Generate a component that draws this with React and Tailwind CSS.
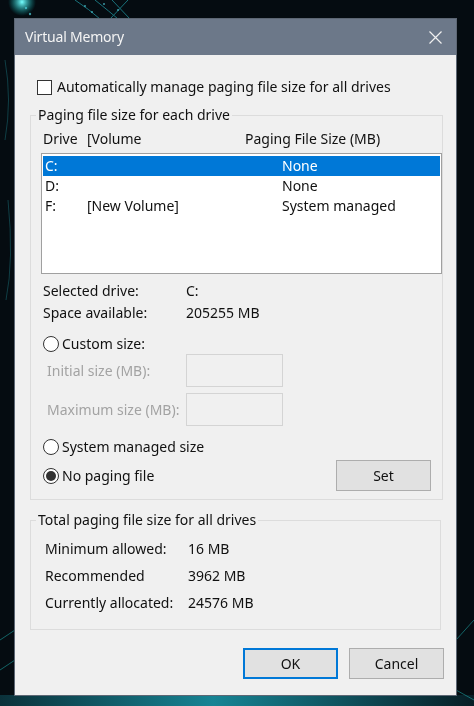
import React from "react";

const drives = [
  { drive: "C:", volume: "", size: "None", selected: true },
  { drive: "D:", volume: "", size: "None" },
  { drive: "F:", volume: "[New Volume]", size: "System managed" },
];

const totals = [
  ["Minimum allowed:", "16 MB"],
  ["Recommended", "3962 MB"],
  ["Currently allocated:", "24576 MB"],
];

function Radio({ checked, label }) {
  return (
    <div className="flex items-center h-[20px] ml-[12px]">
      <span className="w-[16px] h-[16px] rounded-full border border-[#333] bg-white flex items-center justify-center">
        {checked && <span className="w-[10px] h-[10px] rounded-full bg-[#333]" />}
      </span>
      <span className="ml-[3px]">{label}</span>
    </div>
  );
}

function Backdrop() {
  // teal wallpaper bits around the dialog
  return (
    <svg className="absolute inset-0" width="474" height="706" viewBox="0 0 474 706">
      <defs>
        <radialGradient id="glow" cx="0.5" cy="0.5" r="0.5">
          <stop offset="0" stopColor="#7ff" stopOpacity="1" />
          <stop offset="1" stopColor="#0aa" stopOpacity="0" />
        </radialGradient>
        <linearGradient id="floor" x1="0" y1="0" x2="1" y2="0">
          <stop offset="0" stopColor="#0c3a44" />
          <stop offset="0.45" stopColor="#1ba2b5" />
          <stop offset="1" stopColor="#08222a" />
        </linearGradient>
      </defs>
      <circle cx="22" cy="2" r="14" fill="url(#glow)" />
      <g stroke="#1f8c96" strokeWidth="1" fill="none" opacity="0.8">
        <path d="M75 0 Q90 10 100 19 M95 0 Q110 12 118 19 M112 0 L130 19 M128 0 L110 19" />
        <path d="M5 60 Q12 100 5 140 M8 200 Q14 260 6 300" opacity="0.5" />
      </g>
      <g fill="#4fd0dc" opacity="0.7">
        <circle cx="85" cy="6" r="1" />
        <circle cx="92" cy="12" r="1" />
        <circle cx="104" cy="4" r="1" />
        <circle cx="118" cy="10" r="1" />
        <circle cx="30" cy="14" r="1.2" />
        <circle cx="26" cy="8" r="1.2" />
      </g>
      <rect x="0" y="695" width="474" height="11" fill="url(#floor)" opacity="0.8" />
      <g stroke="#2bb" strokeWidth="1" opacity="0.5" fill="none">
        <path d="M0 640 L15 630 M0 670 L15 660 M456 640 L474 620 M456 690 L474 700" />
      </g>
    </svg>
  );
}

export default function App() {
  return (
    <div className="relative w-[474px] h-[706px] overflow-hidden bg-[#050c11] font-['Noto_Sans',sans-serif] text-[14px] leading-[20px] text-[#111]">
      <Backdrop />

      <div className="relative ml-[15px] mt-[19px] w-[441px] h-[676px] bg-[#f0f0f0] shadow-[0_0_0_1px_#5d6774]">
        {/* title bar */}
        <div className="flex items-center justify-between h-[36px] bg-[#6c7889] pl-[10px] pr-[14px]">
          <span className="text-[14px] tracking-[-0.2px] text-[#f4f4f4]">Virtual Memory</span>
          <svg width="13" height="13" viewBox="0 0 13 13" className="text-[#f0f0f0]">
            <path d="M0.5 0.5 L12.5 12.5 M12.5 0.5 L0.5 12.5" stroke="currentColor" strokeWidth="1.2" />
          </svg>
        </div>

        <div className="pt-[22px]">
          <div className="flex items-center h-[20px] ml-[22px]">
            <span className="w-[15px] h-[15px] border border-[#333] bg-white" />
            <span className="ml-[5px]">Automatically manage paging file size for all drives</span>
          </div>

          {/* per drive */}
          <fieldset className="mt-[8px] ml-[15px] w-[411px] border border-[#dcdcdc] pb-[8px]">
            <legend className="ml-[5px] px-[2px]">Paging file size for each drive</legend>

            <div className="flex mt-[4px] h-[20px]">
              <span className="ml-[12px] w-[44px]">Drive</span>
              <span className="w-[158px]">[Volume</span>
              <span>Paging File Size (MB)</span>
            </div>

            <div className="mt-[4px] ml-[10px] w-[401px] h-[121px] border border-[#a0a0a0] bg-white p-[1px] pt-[2px]">
              {drives.map((d) => (
                <div
                  key={d.drive}
                  className={
                    d.selected
                      ? "flex h-[20px] items-center bg-[#0078d7] text-white"
                      : "flex h-[20px] items-center"
                  }
                >
                  <span className="w-[44px] pl-[2px]">{d.drive}</span>
                  <span className="w-[195px]">{d.volume}</span>
                  <span>{d.size}</span>
                </div>
              ))}
            </div>

            <div className="flex mt-[7px] h-[20px]">
              <span className="ml-[12px] w-[143px]">Selected drive:</span>
              <span>C:</span>
            </div>
            <div className="flex mt-[2px] h-[20px]">
              <span className="ml-[12px] w-[143px]">Space available:</span>
              <span>205255 MB</span>
            </div>

            <div className="mt-[11px]">
              <Radio label="Custom size:" />
            </div>

            <div className="flex items-center h-[33px]">
              <span className="ml-[16px] w-[139px] text-[#a3a3a3]">Initial size (MB):</span>
              <span className="w-[97px] h-[33px] border border-[#d4d4d4]" />
            </div>
            <div className="flex items-center h-[33px] mt-[6px]">
              <span className="ml-[16px] w-[139px] text-[#a3a3a3]">Maximum size (MB):</span>
              <span className="w-[97px] h-[33px] border border-[#d4d4d4]" />
            </div>

            <div className="mt-[11px]">
              <Radio label="System managed size" />
            </div>

            <div className="flex items-center justify-between h-[31px] mt-[3px]">
              <Radio checked label="No paging file" />
              <button className="mr-[11px] w-[95px] h-[31px] bg-[#e1e1e1] border border-[#adadad]">Set</button>
            </div>
          </fieldset>

          {/* totals */}
          <fieldset className="mt-[10px] ml-[15px] w-[411px] border border-[#dcdcdc] pb-[16px]">
            <legend className="ml-[5px] px-[2px]">Total paging file size for all drives</legend>
            {totals.map(([k, v], i) => (
              <div key={k} className={i === 0 ? "flex h-[20px] mt-[9px]" : "flex h-[20px] mt-[7px]"}>
                <span className="ml-[14px] w-[143px]">{k}</span>
                <span>{v}</span>
              </div>
            ))}
          </fieldset>

          <div className="flex justify-end gap-[11px] mt-[18px] pr-[12px]">
            <button className="w-[95px] h-[31px] bg-[#e1e1e1] border-2 border-[#0078d7]">OK</button>
            <button className="w-[95px] h-[31px] bg-[#e1e1e1] border border-[#adadad]">Cancel</button>
          </div>
        </div>
      </div>
    </div>
  );
}
